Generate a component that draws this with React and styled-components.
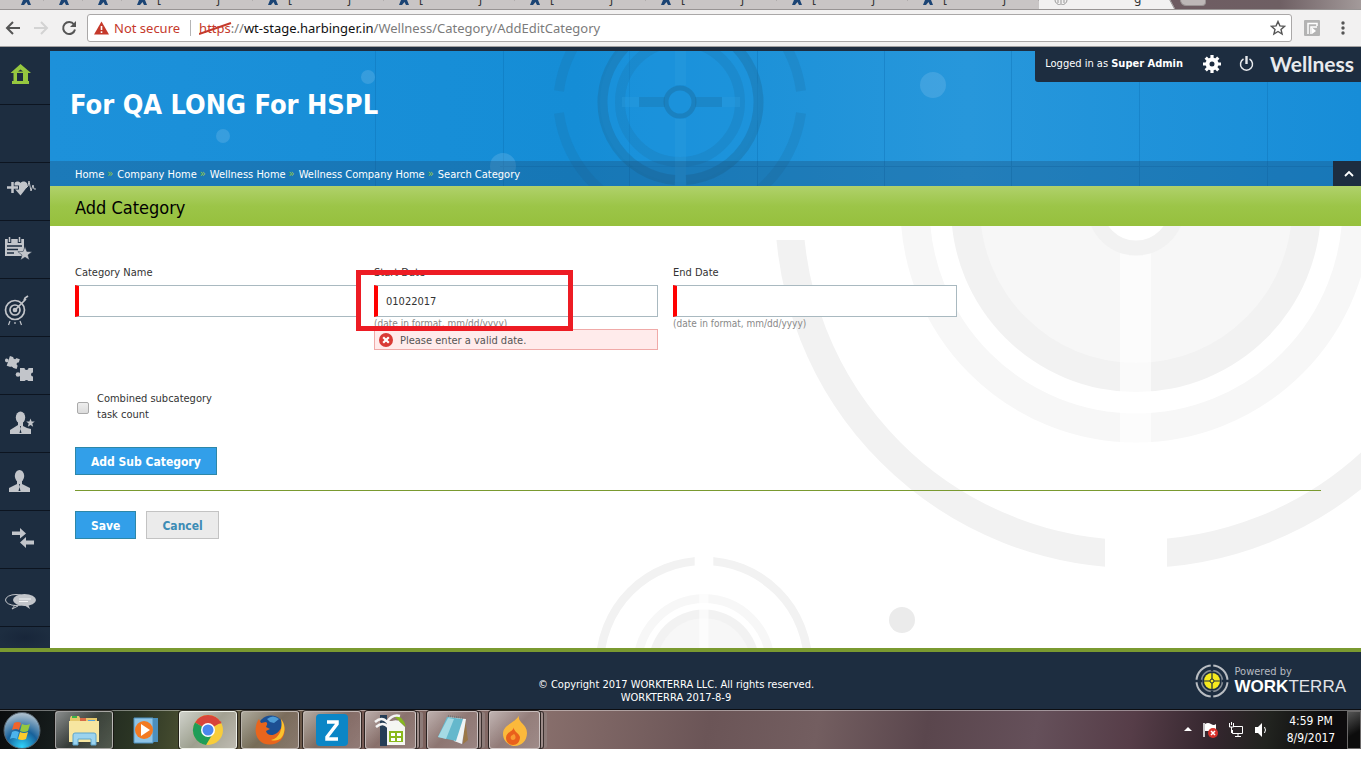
import React from "react";
import styled, { createGlobalStyle } from "styled-components";

const navy = "#1d2d40";
const uiFont = `Tahoma, "DejaVu Sans Condensed", "Noto Sans", sans-serif`;
const humanist = `"Segoe UI", "Noto Sans", sans-serif`;

const GlobalStyle = createGlobalStyle`
  * {
    box-sizing: border-box;
  }

  body {
    margin: 0;
    padding-right: 5px;
    background: #fff;
    color: #333;
    font-family: ${uiFont};
    font-size: 11px;
  }

  a {
    color: inherit;
    text-decoration: none;
  }

  svg {
    display: block;
    flex-shrink: 0;
  }
`;

/* ---------- browser ---------- */

const TabStrip = styled.div`
  display: flex;
  height: 10px;
  overflow: hidden;
  background: linear-gradient(90deg, #a59a9a, #6e5c62 86%, #6e5f63 94%, #a39a9a);
  border-bottom: 1px solid #989494;
`;

const Tab = styled.div`
  position: relative;
  display: flex;
  gap: 10px;
  width: ${(p) => (p.$pinned ? 39 : 131)}px;
  height: 10px;
  padding-left: 15px;
  background: ${(p) => (p.$active ? "#f2f1f1" : "#c9c5c5")};
  color: #333;
  font-family: ${humanist};
  font-size: 12px;
  line-height: 12px;

  &:first-child {
    width: 44px;
    padding-left: 21px;
  }

  &::after {
    content: "";
    position: absolute;
    top: 0;
    right: -3px;
    width: 5px;
    height: 10px;
    background: inherit;
    border-right: 1px solid #8f8b8b;
    transform: skewX(28deg);
  }
`;

const TabTitle = styled.span`
  display: flex;
  gap: 56px;
  margin-top: -7px;
`;

const NewTab = styled.div`
  width: 26px;
  height: 6px;
  margin-left: 10px;
  background: #bdb7b7;
  border: 1px solid #9a9494;
  border-top: 0;
  border-radius: 0 0 4px 6px;
`;

const Toolbar = styled.div`
  display: flex;
  align-items: center;
  height: 37px;
  padding: 0 11px 1px 5px;
  gap: 12px;
  background: #f2f1f1;
  border-bottom: 1px solid #a3a1a1;
`;

const NavButton = styled.button`
  width: 16px;
  height: 16px;
  padding: 0;
  border: 0;
  background: none;
`;

const NavGroup = styled.div`
  display: flex;
  gap: 12px;
  margin-right: -2px;
`;

const AddressBar = styled.div`
  display: flex;
  flex: 1;
  align-items: center;
  height: 28px;
  padding: 0 5px 0 6px;
  background: #fff;
  border: 1px solid #aaa8a8;
  border-radius: 3px;
  font-family: ${humanist};
  font-size: 13px;
  color: #7b7b7b;
`;

const Warning = styled.span`
  padding: 0 10px 0 5px;
  margin-right: 8px;
  border-right: 1px solid #b5b5b5;
  line-height: 16px;
  color: #c5392b;
`;

const Scheme = styled.span`
  position: relative;
  color: #c5392b;

  svg {
    position: absolute;
    left: 0;
    top: 3px;
  }
`;

const Url = styled.span`
  flex: 1;

  b {
    font-weight: 400;
    color: #111;
  }
`;

const Browser = () => (
  <>
    <TabStrip>
      {[1, 1, 1, 0, 0, 0, 0, 0, 0, 0].map((pinned, i) => (
        <Tab key={i} $pinned={!!pinned}>
          <svg width="10" height="5" viewBox="0 0 10 5">
            <path d="M2 0h6l2 5H7L5.500 2 3 5H0z" fill="#1c4474" />
          </svg>
          {!pinned && (
            <TabTitle>
              <span>[</span>
              <span>j</span>
            </TabTitle>
          )}
        </Tab>
      ))}
      <Tab $active>
        <svg width="14" height="5" viewBox="0 0 14 5">
          <path d="M1 0a6 5 0 0 0 12 0M4 0v3M7 0v4M10 0v3" stroke="#999" fill="none" />
        </svg>
        <TabTitle>
          <span />
          <span>g</span>
        </TabTitle>
      </Tab>
      <NewTab />
    </TabStrip>
    <Toolbar>
      <NavGroup>
        <NavButton aria-label="Back">
          <svg width="16" height="16" viewBox="0 0 16 16" fill="none" stroke="#555" strokeWidth="2">
            <path d="M15 8H2M8 2L2 8l6 6" />
          </svg>
        </NavButton>
        <NavButton aria-label="Forward">
          <svg width="16" height="16" viewBox="0 0 16 16" fill="none" stroke="#d3d3d3" strokeWidth="2">
            <path d="M1 8h13M8 2l6 6-6 6" />
          </svg>
        </NavButton>
        <NavButton aria-label="Reload">
          <svg width="16" height="16" viewBox="0 0 16 16" fill="none" stroke="#555" strokeWidth="2">
            <path d="M13 4.500A6 6 0 1 0 14 9.500" />
            <path d="M15 1v6H9z" fill="#555" stroke="none" />
          </svg>
        </NavButton>
      </NavGroup>
      <AddressBar>
        <svg width="15" height="14" viewBox="0 0 15 14">
          <path d="M7.500 0.500L15 13.500H0z" fill="#c5392b" />
          <path d="M7.500 5v4M7.500 10.300v1.700" stroke="#fff" strokeWidth="1.600" />
        </svg>
        <Warning>Not secure</Warning>
        <Url>
          <Scheme>
            https
            <svg width="33" height="14" viewBox="0 0 33 14">
              <path d="M0 12L32 1" stroke="#c5392b" strokeWidth="2" />
            </svg>
          </Scheme>
          ://<b>wt-stage.harbinger.in</b>/Wellness/Category/AddEditCategory
        </Url>
        <svg width="16" height="16" viewBox="0 0 16 16" fill="none" stroke="#555" strokeWidth="1.400">
          <path d="M8 1.500l1.900 4.400 4.700.4-3.600 3.100 1.100 4.600L8 11.500 3.900 14 5 9.400 1.400 6.300l4.700-.4z" />
        </svg>
      </AddressBar>
      <svg width="16" height="16" viewBox="0 0 16 16">
        <rect width="16" height="16" rx="1" fill="#b3b3b3" />
        <path d="M4 14V3.500h9V6M7 14V7h6" stroke="#fff" strokeWidth="1.500" fill="none" />
        <path d="M8 7.500l4 3.500-4 3z" fill="#fff" />
      </svg>
      <svg width="18" height="16" viewBox="0 0 18 16" fill="#555">
        <circle cx="11" cy="3" r="1.700" />
        <circle cx="11" cy="8" r="1.700" />
        <circle cx="11" cy="13" r="1.700" />
      </svg>
    </Toolbar>
  </>
);

/* ---------- sidebar ---------- */

const Sidebar = styled.nav`
  display: flex;
  flex-direction: column;
  width: 50px;
  flex-shrink: 0;
  background: ${navy};
`;

const SideLink = styled.a`
  height: 58px;
  border-bottom: 1px solid #0c1420;
`;

const SideEnd = styled.div`
  flex: 1;
  background: radial-gradient(ellipse at center, #18263a, ${navy} 75%);
`;

const star = (x, y, r) =>
  Array.from({ length: 10 }, (_, i) => {
    const a = (Math.PI / 5) * i - Math.PI / 2;
    const d = i % 2 ? r * 0.42 : r;
    return `${x + d * Math.cos(a)},${y + d * Math.sin(a)}`;
  }).join(" ");

const grey = "#c2c5ca";

const PuzzlePiece = ({ transform }) => (
  <g transform={transform}>
    <path d="M-6-6H7V7H-6z" fill={grey} />
    <circle cx="-8" cy="0.500" r="2.300" fill={grey} />
    <circle cx="0.500" cy="8" r="2" fill={navy} />
    <circle cx="0.500" cy="-6" r="2" fill={navy} />
    <circle cx="7" cy="0.500" r="2" fill={navy} />
  </g>
);

const menu = [
  ["Home", <g fill="#96c83f"><path d="M20.500 17L31 26h-3v8h1v3H12v-3h1.500v-8H10.500z" /><path d="M17 26h6v8h-6v-7z" fill={navy} /><path d="M18 24.500l2.500-2 2.500 2z" fill={navy} /></g>],
  ["Dashboard", null],
  ["Health", <g><path d="M20.500 32.500l-7-8c-1-6 5-7.500 7-4.500 2-3 8-1.500 7 3.500z" fill={grey} /><path d="M7 24.500h12M12.500 19v12" stroke={navy} strokeWidth="4" /><path d="M7 24.500h11M12.500 19v11" stroke={grey} strokeWidth="2.500" /><path d="M26 25l2-2 1-5 2 10 2-6 1 4h2" stroke={grey} fill="none" /></g>],
  ["Events", <g><path d="M5 18h19v17H5z" fill={grey} /><path d="M9.500 16v6M19.500 16v6" stroke={navy} strokeWidth="3.500" /><path d="M9.500 16v5M19.500 16v5" stroke={grey} strokeWidth="1.500" /><path d="M7 25h15M7 28.500h11M7 32h7" stroke={navy} strokeWidth="1.500" /><polygon points={star(25, 33, 7.5)} fill={grey} stroke={navy} strokeWidth="0.500" /></g>],
  ["Goals", <g fill="none" stroke={grey} strokeWidth="1.700"><circle cx="15" cy="31" r="9.500" /><circle cx="15" cy="31" r="5" /><circle cx="15" cy="31" r="1.500" fill={grey} /><path d="M15 31L26 20M24 21.500l1-2.500 3-2" /><path d="M10 42l-1.500 4M20 42l1.500 4M15 43v2" strokeWidth="1.200" /></g>],
  ["Activities", <g><PuzzlePiece transform="translate(13 25) rotate(18) scale(.8)" /><PuzzlePiece transform="translate(26 37)" /></g>],
  ["Coaches", <g fill={grey}><ellipse cx="20.500" cy="22.500" rx="4.700" ry="6" /><path d="M18 26h5v5l4 2 4 1v5H10v-4l8-5z" /><path d="M20 31l.500 3-1 4h2l-1-4 .500-3" fill={navy} /><polygon points={star(30.500, 28, 4.5)} /></g>],
  ["Profile", <g fill={grey}><ellipse cx="19.500" cy="23" rx="4.700" ry="6" /><path d="M17 27h5v4l8 4v4H9v-4l8-4z" /><path d="M19 31l.500 3-1 4h2l-1-4 .500-3" fill={navy} /></g>],
  ["Exchange", <g fill={grey}><path d="M12 20.500h8v-3.500l6 5.500-6 5v-3.500h-8zM34 29.500h-8v-3.500L20 31.500l6 5.500v-3.500h8z" /></g>],
  ["Messages", <g><ellipse cx="16" cy="31" rx="10.500" ry="5.500" fill="none" stroke={grey} /><path d="M15 36l-3 4 6-3" fill="none" stroke={grey} /><ellipse cx="24.500" cy="31" rx="11.500" ry="6" fill={grey} /><path d="M24 36l6 4-2-5z" fill={grey} /><path d="M19 30h12M19 32.500h9" stroke="#fff" strokeWidth="0.800" /></g>],
];

/* ---------- page ---------- */

const Main = styled.div`
  display: flex;
`;

const Page = styled.div`
  position: relative;
  flex: 1;
  min-width: 0;
  border-top: 4px solid ${navy};
`;

const Banner = styled.header`
  position: relative;
  overflow: hidden;
  background: linear-gradient(90deg, #1d91da, #158dd6 40%, #2797db 70%, #178dd8);
`;

const Art = styled.svg`
  position: absolute;
  top: 0;
  left: 0;
`;

const CompanyName = styled.h1`
  position: relative;
  margin: 0;
  padding: 36px 20px 38px;
  color: #fff;
  font-size: 27px;
  font-weight: 700;
  line-height: 36px;
`;

const Crumbs = styled.nav`
  position: relative;
  display: flex;
  align-items: center;
  height: 25px;
  padding-left: 25px;
  gap: 4px;
  background: rgba(25, 70, 110, 0.3);
  color: #fff;
  line-height: 25px;

  a {
    padding-top: 1px;
  }

  span {
    color: #96c83f;
    margin-left: -1px;
  }
`;

const Collapse = styled.button`
  display: flex;
  align-items: center;
  justify-content: center;
  width: 28px;
  height: 25px;
  margin-left: auto;
  padding: 0 0 0 4px;
  border: 0;
  background: ${navy};
`;

const Session = styled.div`
  position: absolute;
  top: -4px;
  right: 0;
  display: flex;
  align-items: center;
  height: 35px;
  padding: 0 7px 2px 10px;
  background: ${navy};
  border-bottom-left-radius: 3px;
  color: #fff;
`;

const IconLink = styled.a`
  margin-left: ${(p) => p.$gap}px;
`;

const Product = styled.span`
  margin-left: 16px;
  color: #e8eaed;
  font-family: Lato, sans-serif;
  font-size: 21px;
  font-weight: 700;
`;

const PageTitle = styled.h2`
  margin: 0;
  padding: 4px 25px 0;
  height: 40px;
  background: linear-gradient(#b0d16b, #9cc548 50%, #96c03d);
  color: #000;
  font-size: 18px;
  font-weight: 400;
  line-height: 36px;
`;

const Content = styled.main`
  position: relative;
  min-height: 422px;
  padding: 39px 40px 40px 25px;
  overflow: hidden;
`;

const Form = styled.form`
  position: relative;
`;

const Fields = styled.div`
  display: flex;
  align-items: flex-start;
  gap: 15px;
`;

const Field = styled.div`
  position: relative;
  display: flex;
  flex-direction: column;
  width: 284px;

  label {
    margin-bottom: 4px;
    line-height: 16px;
  }
`;

const Input = styled.input`
  height: 32px;
  padding: 1px 8px 0;
  border: 1px solid #a9b9c0;
  border-left: 4px solid #f00;
  background: #fff;
  color: #333;
  font: 11px ${uiFont};
`;

const Hint = styled.span`
  height: 12px;
  color: #888;
  font-size: 10px;
  line-height: 14px;
`;

const ErrorBox = styled.div`
  display: flex;
  align-items: center;
  gap: 7px;
  height: 21px;
  padding: 1px 4px 0;
  border: 1px solid #f0aaa8;
  background: #ffebeb;
  color: #555;
`;

const Highlight = styled.div`
  position: absolute;
  top: 5px;
  left: -18px;
  width: 217px;
  height: 61px;
  border: 5px solid #ed1c24;
  pointer-events: none;
`;

const CheckRow = styled.div`
  display: flex;
  align-items: center;
  gap: 8px;
  margin: 41px 0 24px;
  padding-left: 2px;

  label {
    width: 120px;
    line-height: 16px;
  }
`;

const Checkbox = styled.input`
  appearance: none;
  width: 12px;
  height: 12px;
  margin: 2px 0 0;
  border: 1px solid #aaa;
  border-radius: 2px;
  background: linear-gradient(#eee, #dcdcdc);
`;

const Button = styled.button`
  height: 28px;
  padding: 1px 15px 0;
  border: 1px solid ${(p) => (p.$plain ? "#c3c3c3" : "#2d87a8")};
  background: ${(p) => (p.$plain ? "#ebebeb" : "#329fe9")};
  color: ${(p) => (p.$plain ? "#3d8cb5" : "#fff")};
  font: bold 12px ${uiFont};
`;

const Rule = styled.hr`
  height: 1px;
  margin: 15px 0 20px;
  border: 0;
  background: #7a9a30;
`;

const Actions = styled.div`
  display: flex;
  gap: 10px;
`;

const Target = ({ transform }) => (
  <g transform={transform} fill="none">
    <circle r="347" stroke="#f2f2f2" strokeWidth="28" />
    <path d="M-31-365h62v730h-62zM-365-33h730v66h-730z" fill="#fff" />
    <circle r="221" stroke="#f7f7f7" strokeWidth="29" />
    <circle r="185" fill="#f2f2f2" />
    <circle r="156" fill="#f7f7f7" />
    <path d="M-16-236h31v472h-31z" fill="#fff" opacity="0.600" />
    <circle r="41" fill="#fff" stroke="#f2f2f2" strokeWidth="15" />
  </g>
);

const Header = () => (
  <Banner>
    <Art width="1400" height="135" viewBox="50 51 1400 135" aria-hidden="true">
      <g stroke="#0a6cb0" opacity="0.350">
        <path d="M375.500 51v135M503.500 51v135M629.500 51v135M757.500 51v135M884.500 51v135M1011.500 51v135M1139.500 51v135M1267.500 51v135M500 166.500h870" />
      </g>
      <circle cx="680" cy="102" r="80" fill="#1f96e0" opacity="0.400" />
      <g fill="none" stroke="#1b6d9f" strokeWidth="10">
        <path d="M559 91a122 122 0 0 1 242 0M559 113a122 122 0 0 0 242 0" opacity="0.220" />
        <path d="M675 180a78 78 0 1 1 11 0" opacity="0.400" />
        <circle cx="680" cy="102" r="60" opacity="0.220" />
        <path d="M639 102h26M695 102h27" opacity="0.300" />
        <circle cx="680" cy="102" r="14" strokeWidth="5" opacity="0.450" />
      </g>
      <path d="M675 119h11v67h-11zM622 97h17v10h-17zM722 97h18v10h-18zM675 51h11v34h-11z" fill="#2f9de0" opacity="0.350" />
      <g fill="#8fc8ee" opacity="0.250">
        <circle cx="368" cy="77" r="7" />
        <circle cx="223" cy="136" r="7" />
        <circle cx="503" cy="166" r="13" />
        <circle cx="933" cy="85" r="13" />
      </g>
    </Art>
    <CompanyName>For QA LONG For HSPL</CompanyName>
    <Crumbs aria-label="Breadcrumb">
      {["Home", "Company Home", "Wellness Home", "Wellness Company Home"].map((name) => (
        <React.Fragment key={name}>
          <a href="#">{name}</a>
          <span>»</span>
        </React.Fragment>
      ))}
      <a href="#">Search Category</a>
      <Collapse aria-label="Collapse header">
        <svg width="10" height="7" viewBox="0 0 10 7" fill="none" stroke="#fff" strokeWidth="1.800">
          <path d="M1 6l4-4 4 4" />
        </svg>
      </Collapse>
    </Crumbs>
  </Banner>
);

const SessionBar = () => (
  <Session>
    <span>
      Logged in as <b>Super Admin</b>
    </span>
    <IconLink href="#" aria-label="Settings" $gap={20}>
      <svg width="18" height="18" viewBox="0 0 18 18" fill="none" stroke="#fff">
        <circle cx="9" cy="9" r="4.500" strokeWidth="4" />
        <path d="M9 0v4M9 14v4M0 9h4M14 9h4M2.700 2.700l3 3M12.300 12.300l3 3M2.700 15.300l3-3M12.300 5.700l3-3" strokeWidth="3.200" />
      </svg>
    </IconLink>
    <IconLink href="#" aria-label="Log out" $gap={18}>
      <svg width="15" height="16" viewBox="0 0 15 16" fill="none" stroke="#e8eaed">
        <path d="M4.500 3a6 6 0 1 0 6 0" strokeWidth="1.500" />
        <path d="M7.500 0v8" strokeWidth="2.400" />
      </svg>
    </IconLink>
    <Product>Wellness</Product>
  </Session>
);

const CategoryForm = () => (
  <Content>
    <Art width="1400" height="422" viewBox="50 226 1400 422" aria-hidden="true">
      <Target transform="translate(1136 207)" />
      <Target transform="translate(704 665) scale(.3)" />
      <circle cx="902" cy="620" r="13" fill="#ebebeb" />
    </Art>
    <Form onSubmit={(e) => e.preventDefault()}>
      <Fields>
        <Field>
          <label htmlFor="name">Category Name</label>
          <Input id="name" />
        </Field>
        <Field>
          <label htmlFor="start">Start Date</label>
          <Input id="start" defaultValue="01022017" />
          <Hint>(date in format, mm/dd/yyyy)</Hint>
          <ErrorBox role="alert">
            <svg width="14" height="14" viewBox="0 0 14 14">
              <circle cx="7" cy="7" r="7" fill="#d93a35" />
              <path d="M4.200 4.200l5.600 5.600M9.800 4.200L4.200 9.800" stroke="#fff" strokeWidth="2.200" />
            </svg>
            Please enter a valid date.
          </ErrorBox>
          <Highlight />
        </Field>
        <Field>
          <label htmlFor="end">End Date</label>
          <Input id="end" />
          <Hint>(date in format, mm/dd/yyyy)</Hint>
        </Field>
      </Fields>
      <CheckRow>
        <Checkbox type="checkbox" id="combined" />
        <label htmlFor="combined">Combined subcategory task count</label>
      </CheckRow>
      <Button type="button">Add Sub Category</Button>
      <Rule />
      <Actions>
        <Button>Save</Button>
        <Button type="button" $plain>
          Cancel
        </Button>
      </Actions>
    </Form>
  </Content>
);

/* ---------- footer ---------- */

const FooterBar = styled.footer`
  display: grid;
  grid-template-columns: 1fr auto 1fr;
  align-items: center;
  height: 61px;
  padding: 0 15px 0 6px;
  background: ${navy};
  border-top: 4px solid #7a9a30;
  color: #fff;
`;

const Copyright = styled.p`
  grid-column: 2;
  margin: 0;
  padding-top: 20px;
  line-height: 13px;
  text-align: center;
`;

const Powered = styled.div`
  display: flex;
  align-items: center;
  justify-self: end;
  gap: 6px;
  color: #b5bac0;
  line-height: 12px;

  strong {
    display: block;
    color: #e2e4e8;
    font: 17px/18px "Liberation Sans", sans-serif;
  }

  b {
    color: #fff;
  }
`;

const Footer = () => (
  <FooterBar>
    <Copyright>
      © Copyright 2017 WORKTERRA LLC. All rights reserved.
      <br />
      WORKTERRA 2017-8-9
    </Copyright>
    <Powered>
      <svg width="34" height="34" viewBox="0 0 34 34" fill="none">
        <circle cx="17" cy="17" r="15.500" stroke="#b9bdc2" strokeWidth="2" />
        <circle cx="17" cy="17" r="10.500" stroke="#858c94" strokeWidth="1.500" />
        <path d="M17 0v7M17 27v7M0 17h7M27 17h7" stroke={navy} strokeWidth="2.500" />
        <circle cx="17" cy="17" r="8" fill="#f7ea1e" />
        <path d="M17 9v16M9 17h16" stroke={navy} strokeWidth="1.200" />
        <circle cx="17" cy="17" r="2" fill="#f7ea1e" stroke={navy} />
      </svg>
      <div>
        Powered by
        <strong>
          <b>WORK</b>TERRA
        </strong>
      </div>
    </Powered>
  </FooterBar>
);

/* ---------- taskbar ---------- */

const Taskbar = styled.div`
  display: flex;
  align-items: center;
  height: 40px;
  padding-left: 2px;
  border-top: 1px solid #0c0e12;
  background: linear-gradient(
    100deg,
    #0a0c0d 0,
    #151b1b 4%,
    #2b3524 10%,
    #4a5031 14%,
    #645840 19%,
    #755953 26%,
    #876e6b 40%,
    #6b5557 52%,
    #735e60 60%,
    #5a464d 68%,
    #65505a 76%,
    #563d48 83%,
    #34262e 89%,
    #21231f 93%,
    #0d0b0d 97%
  );
  box-shadow: inset 0 1px 0 rgba(255, 255, 255, 0.4);
`;

const TaskButton = styled.button`
  display: flex;
  align-items: center;
  justify-content: center;
  width: ${(p) => (p.$stack ? 51 : 58)}px;
  height: 38px;
  margin-right: ${(p) => (p.$stack ? 11 : 4)}px;
  padding: 0;
  border: 1px solid ${(p) => (p.$bare ? "transparent" : p.$active ? "#eef0e8" : "rgba(230, 225, 225, 0.6)")};
  border-radius: 3px;
  background: ${(p) =>
    p.$bare
      ? "none"
      : `linear-gradient(135deg, rgba(255, 255, 255, ${p.$active ? 0.75 : 0.5}), rgba(255, 255, 255, ${
          p.$active ? 0.45 : 0.12
        }) 50%, rgba(255, 255, 255, ${p.$active ? 0.6 : 0.2}))`};
  box-shadow: ${(p) =>
    p.$bare ? "none" : p.$stack ? "0 0 0 1px #2a2220, 4px 0 0 -1px #9d8c89, 4px 0 0 0 #3b302e, 8px 0 0 -1px #8d7b78" : "0 0 0 1px rgba(20, 16, 14, 0.7)"};
`;

const StartButton = styled.button`
  width: 40px;
  height: 38px;
  margin-right: 13px;
  padding: 0;
  border: 0;
  background: none;
`;

const Tray = styled.div`
  display: flex;
  align-items: center;
  gap: 10px;
  margin-left: auto;
`;

const Clock = styled.time`
  width: 62px;
  margin-left: 2px;
  color: #fff;
  font: 12px/17px ${uiFont};
  text-align: center;
`;

const ShowDesktop = styled.button`
  width: 14px;
  height: 38px;
  margin-left: -5px;
  padding: 0;
  border: 1px solid #6b6969;
  background: linear-gradient(150deg, #555, #0c0c0c 60%);
`;

const apps = [
  {
    name: "Explorer",
    art: (
      <>
        <path d="M3 5l1-2h8l1 2h17v22H3z" fill="#e6c86b" />
        <path d="M5 3h5v2H5z" fill="#3cb54a" />
        <path d="M13 5h6v3h-6z" fill="#d96a45" />
        <path d="M21 7h7v3h-7z" fill="#58a4d8" />
        <path d="M2 8h30v21H2z" fill="#f7e6a0" />
        <path d="M6 32V22q0-2 2-2h19q2 0 2 2v10h-5v-6H11v6z" fill="#9bd3ef" stroke="#5fa6cc" />
      </>
    ),
  },
  {
    name: "Media Player",
    bare: true,
    art: (
      <>
        <path d="M8 5h21v24H8z" fill="#4b8fbd" />
        <path d="M5 5h19v25H5z" fill="#8ec4e6" stroke="#4f92c0" />
        <circle cx="15" cy="17" r="9" fill="#f27a22" />
        <path d="M12 11l9 6-9 6z" fill="#fff" />
      </>
    ),
  },
  {
    name: "Chrome",
    active: true,
    art: (
      <>
        <circle cx="17" cy="17" r="15" fill="#f8cd3a" />
        <path d="M17 17L4 9.500a15 15 0 0 1 26 0z" fill="#d8453a" />
        <path d="M17 17L4 9.500A15 15 0 0 0 15 32l6-10z" fill="#1f9d58" />
        <path d="M17 9.500h13.200" stroke="#d8453a" strokeWidth="2" />
        <circle cx="17" cy="17" r="7" fill="#fff" />
        <circle cx="17" cy="17" r="5.500" fill="#4a87ee" />
      </>
    ),
  },
  {
    name: "Firefox",
    art: (
      <>
        <circle cx="18" cy="16" r="13.500" fill="#1c4f93" />
        <path d="M14 6q6-5 12 0l-5 4-4-1z" fill="#4d9bd4" />
        <path d="M28 6c5 6 5 15 0 21-6 6-17 6-22 0C1 21 2 11 6 6l2 4 5-1c2 1 1 3 0 5l4 2-4 2c1 5 7 5 11 2 5-4 6-9 4-14z" fill="#e8651d" />
        <path d="M28 6c4 5 5 12 1 18-3 4-8 4-11 3 9-2 12-12 10-21z" fill="#fbc32d" />
      </>
    ),
  },
  {
    name: "Zoom",
    art: (
      <>
        <rect x="1" y="1" width="32" height="32" rx="4" fill="#0b86c6" />
        <path d="M12 9h10v2L12 24v2h11" fill="none" stroke="#fff" strokeWidth="3.500" />
      </>
    ),
  },
  {
    name: "Calc",
    stack: true,
    art: (
      <>
        <path d="M6 2h7v31H6z" fill="#253d56" />
        <path d="M13 8h12l6 6v18H13z" fill="#f4f6f2" />
        <path d="M19 2q10 0 13 12l-6-5z" fill="#86b81f" />
        <path d="M15 18h14v11H15z" fill="#8ab91b" />
        <path d="M17 20h4v3h-4zM23 20h4v3h-4zM17 25h4v3h-4zM23 25h4v3h-4z" fill="#fff" />
        <path d="M1 9q7-6 12 0 5-8 13-6M2 14q7-6 12 0 3-7 11-5" fill="none" stroke="#f4f4f4" strokeWidth="2.500" />
      </>
    ),
  },
  {
    name: "Notepad",
    stack: true,
    art: (
      <>
        <path d="M29 5l3 22-5 4z" fill="#9a7747" />
        <path d="M12 4l18 2-4 25-8-3z" fill="#eef3f5" />
        <path d="M11 4l16 2-7 22L2 24z" fill="#65b8cc" />
        <path d="M12 5l6 1-8 20-8-2z" fill="#a5dae4" />
        <path d="M12 3l16 2" stroke="#777" strokeWidth="2" strokeDasharray="1 1" />
      </>
    ),
  },
  {
    name: "Flame",
    stack: true,
    art: (
      <>
        <path d="M22 1c-5 8 7 9 7 19 0 8-6 13-12 13S5 28 5 21C5 11 17 11 22 1z" fill="#fbb93b" />
        <path d="M16 14c-1 4 5 6 6 10 0 5-3 8-7 8s-7-3-7-7c0-6 7-6 8-11z" fill="#e9601b" />
        <path d="M16 21c3 3 1 6-1 6s-3-2-2-4z" fill="#f99b31" />
      </>
    ),
  },
];

const SystemBar = () => (
  <Taskbar>
    <StartButton aria-label="Start">
      <svg width="40" height="38" viewBox="0 0 40 38">
        <defs>
          <radialGradient id="orb" cx=".5" cy=".95" r=".9">
            <stop offset="0" stopColor="#2fd3fb" />
            <stop offset=".5" stopColor="#17619b" />
            <stop offset="1" stopColor="#a8bccb" />
          </radialGradient>
        </defs>
        <circle cx="20" cy="19.500" r="18" fill="url(#orb)" stroke="#57636c" />
        <path d="M12 12q4-2 7 0l-2 7q-3-2-7 0z" fill="#f0642a" />
        <path d="M20 13q4 2 8 0l-2 7q-4 2-8 0z" fill="#95c83d" />
        <path d="M10 21q3-2 7 0l-2 7q-4-2-7 0z" fill="#4cb3ec" />
        <path d="M18 21q4 2 8 0l-2 7q-4 2-8 0z" fill="#fccb2c" />
      </svg>
    </StartButton>
    {apps.map((app) => (
      <TaskButton key={app.name} aria-label={app.name} $bare={app.bare} $active={app.active} $stack={app.stack}>
        <svg width="34" height="34" viewBox="0 0 34 34">
          {app.art}
        </svg>
      </TaskButton>
    ))}
    <Tray>
      <svg width="8" height="5" viewBox="0 0 8 5">
        <path d="M4 0l4 4H0z" fill="#fff" />
      </svg>
      <svg width="16" height="16" viewBox="0 0 16 16">
        <path d="M2 1v14" stroke="#fff" strokeWidth="1.500" />
        <path d="M3 2q3-2 6 0t5 0v7H3z" fill="#fff" />
        <circle cx="11" cy="11" r="5" fill="#d8322c" />
        <path d="M9 9l4 4M13 9l-4 4" stroke="#fff" strokeWidth="1.500" />
      </svg>
      <svg width="16" height="16" viewBox="0 0 16 16" fill="none" stroke="#fff">
        <path d="M5 4.500h9.500v7H4.500V8M7 14.500h6M10 12v2" />
        <path d="M1.500 1v4h4V1M3.500 0v3M3.500 5v6" />
      </svg>
      <svg width="14" height="16" viewBox="0 0 14 16" fill="none" stroke="#fff">
        <path d="M1 5h3l4-4v14l-4-4H1z" fill="#fff" stroke="none" />
        <path d="M10.500 5q2 3 0 6" />
      </svg>
      <Clock>
        4:59 PM
        <br />
        8/9/2017
      </Clock>
      <ShowDesktop aria-label="Show desktop" />
    </Tray>
  </Taskbar>
);

const App = () => (
  <>
    <GlobalStyle />
    <Browser />
    <Main>
      <Sidebar>
        {menu.map(([name, icon]) => (
          <SideLink key={name} href="#" aria-label={name}>
            <svg width="50" height="57" viewBox="0 0 50 57">
              {icon}
            </svg>
          </SideLink>
        ))}
        <SideEnd />
      </Sidebar>
      <Page>
        <Header />
        <PageTitle>Add Category</PageTitle>
        <CategoryForm />
        <SessionBar />
      </Page>
    </Main>
    <Footer />
    <SystemBar />
  </>
);

export default App;
